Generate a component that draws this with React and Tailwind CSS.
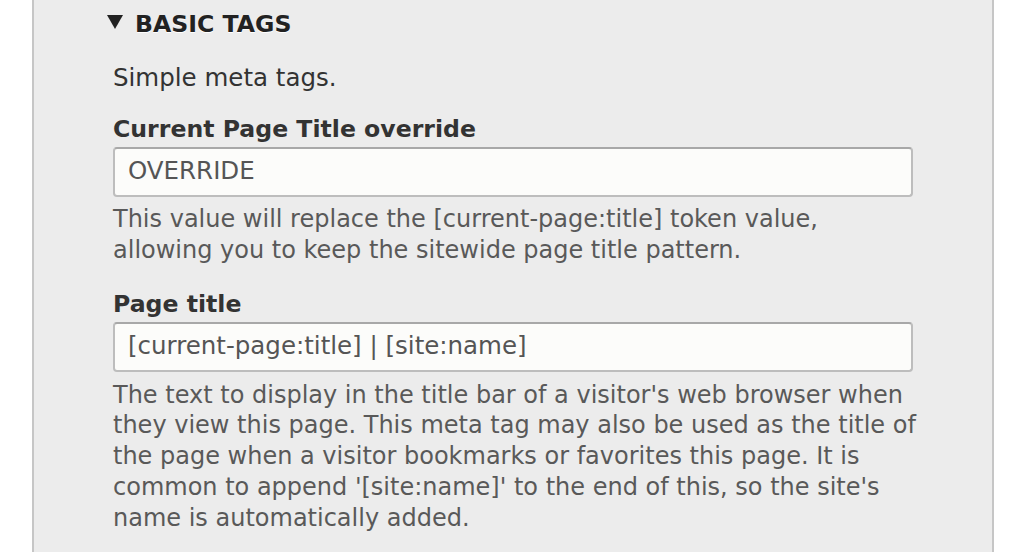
export default function App() {
  const font = { fontFamily: '"DejaVu Sans", "Liberation Sans", sans-serif' };
  return (
    <div className="w-[1024px] h-[552px] overflow-hidden bg-white" style={font}>
      <div className="ml-[32px] w-[962px] h-full border-x-2 border-[#c6c6c6] bg-[#ececec] pl-[79px] pt-[9px]">
        {/* fieldset legend */}
        <div className="flex items-start ml-[-6px]">
          <svg width="16" height="14" viewBox="0 0 16 14" className="mt-[6px] mr-[12px] shrink-0">
            <path d="M0 0 H16 L8 14 Z" fill="#222" />
          </svg>
          <span className="text-[23.6px] font-bold leading-[30px] text-[#222] [text-shadow:0_1px_0_#fff]">BASIC TAGS</span>
        </div>

        <p className="mt-[23.5px] text-[24.5px] leading-[30px] text-[#333]">Simple meta tags.</p>

        <div className="mt-[22px]">
          <label className="block text-[23.6px] font-bold leading-[28px] text-[#333]">Current Page Title override</label>
          <div className="mt-[4px] w-[800px] h-[50px] rounded-[4px] border-2 border-[#bdbdbd] border-t-[#a8a8a8] bg-[#fcfcfa] flex items-center px-[13px] text-[24.5px] text-[#555]">
            OVERRIDE
          </div>
          <p className="mt-[7px] text-[24px] leading-[31px] text-[#595959]">
            This value will replace the [current-page:title] token value,
            <br />
            allowing you to keep the sitewide page title pattern.
          </p>
        </div>

        <div className="mt-[24px]">
          <label className="block text-[23.6px] font-bold leading-[28px] text-[#333]">Page title</label>
          <div className="mt-[4px] w-[800px] h-[50px] rounded-[4px] border-2 border-[#bdbdbd] border-t-[#a8a8a8] bg-[#fcfcfa] flex items-center px-[13px] text-[24.5px] text-[#555]">
            [current-page:title] | [site:name]
          </div>
          <p className="mt-[8px] text-[24px] leading-[30.8px] text-[#595959]">
            The text to display in the title bar of a visitor's web browser when
            <br />
            they view this page. This meta tag may also be used as the title of
            <br />
            the page when a visitor bookmarks or favorites this page. It is
            <br />
            common to append '[site:name]' to the end of this, so the site's
            <br />
            name is automatically added.
          </p>
        </div>
      </div>
    </div>
  );
}
